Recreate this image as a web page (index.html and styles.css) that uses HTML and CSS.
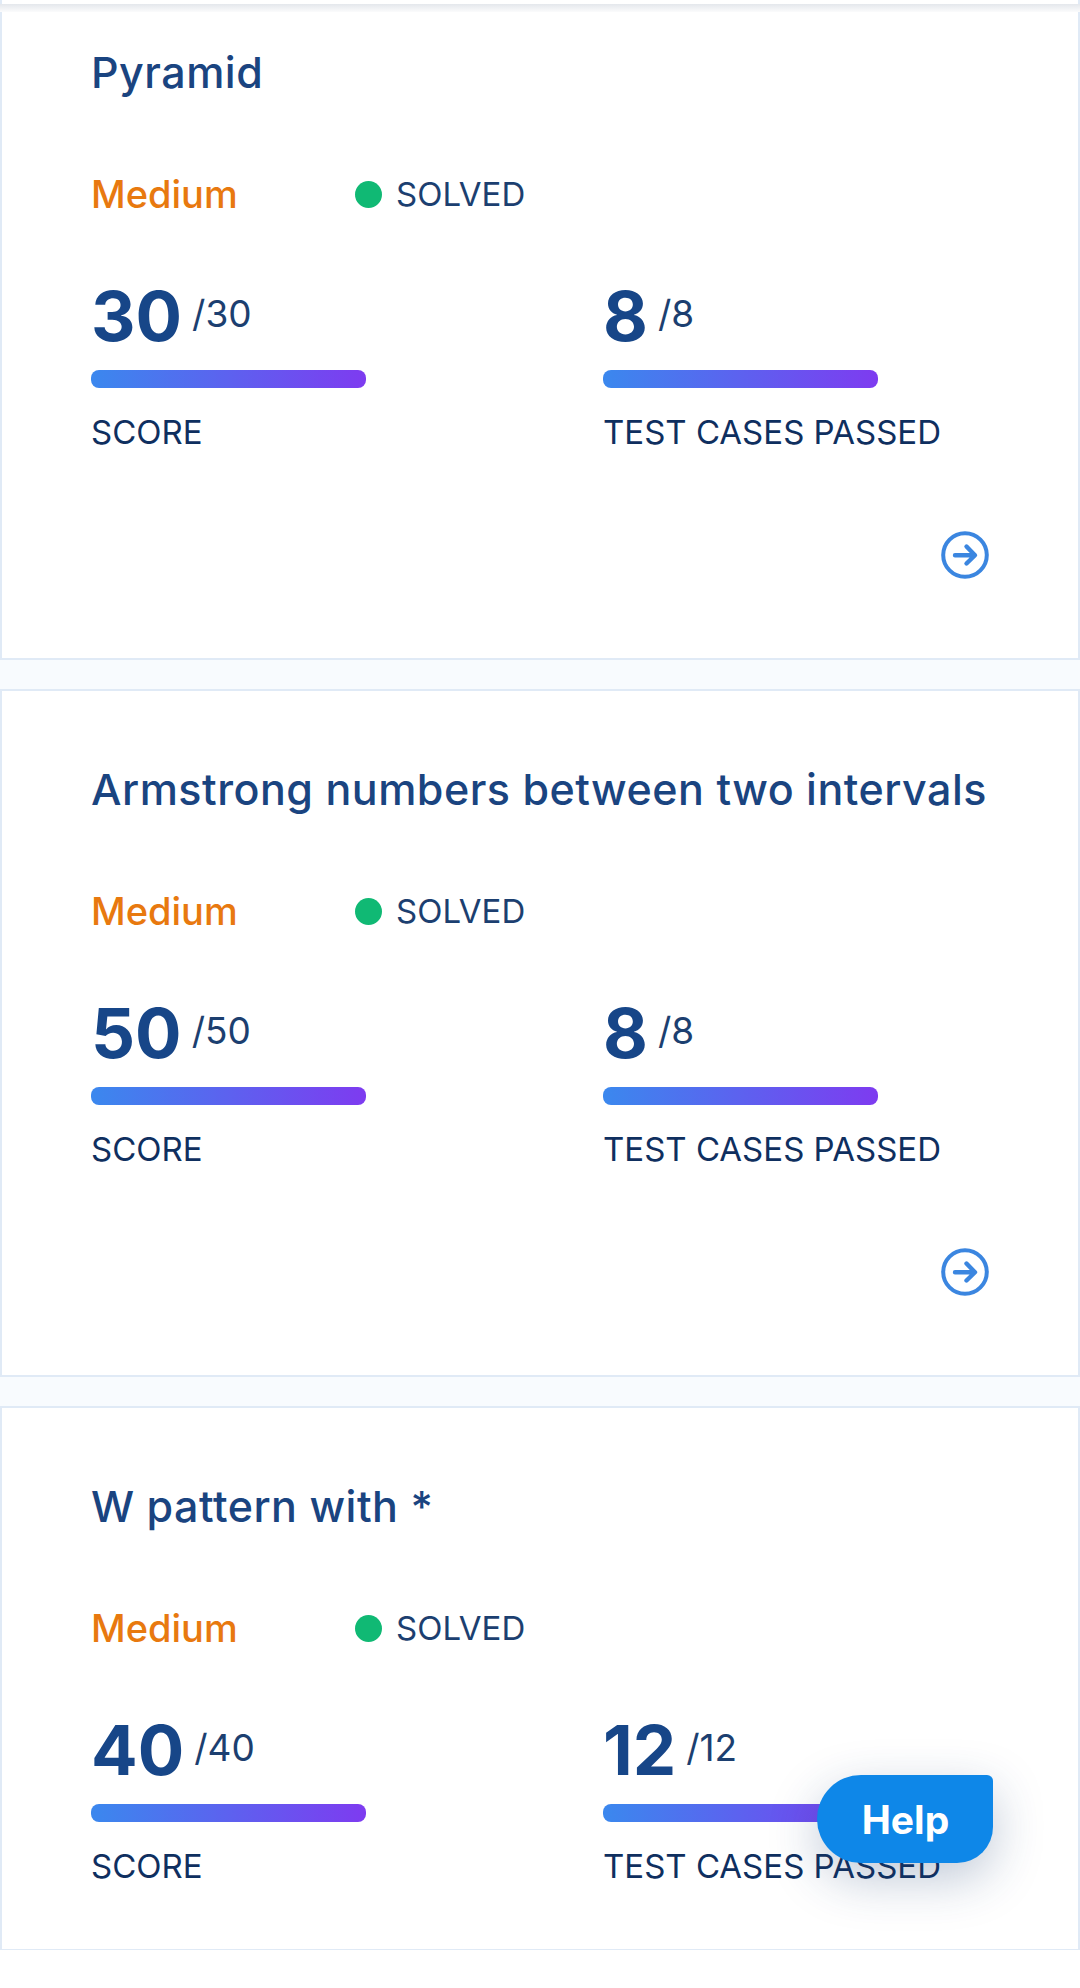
FILE: index.html
```html
<!DOCTYPE html>
<html lang="en">
<head>
<meta charset="utf-8">
<title>Problems</title>
<link rel="stylesheet" href="styles.css">
</head>
<body>
<div class="top-shadow"></div>
<main class="list">
  <article class="card">
    <h2 class="title">Pyramid</h2>
    <div class="meta"><span class="level">Medium</span><span class="status"><i class="dot"></i>SOLVED</span></div>
    <div class="stats">
      <div class="stat"><div class="nums"><b class="num">30</b><span class="total">/30</span></div><div class="bar"></div><div class="label">SCORE</div></div>
      <div class="stat"><div class="nums"><b class="num">8</b><span class="total">/8</span></div><div class="bar"></div><div class="label">TEST CASES PASSED</div></div>
    </div>
    <div class="go"><svg class="arrow" viewBox="0 0 48 48" fill="none" stroke="#3b86e0" stroke-linecap="round" stroke-linejoin="round"><circle cx="24" cy="24" r="21.8" stroke-width="4"/><path d="M14 24.2H33M25.5 15.5L34 24.2L25.5 32.5" stroke-width="4.4"/></svg></div>
  </article>
  <article class="card">
    <h2 class="title">Armstrong numbers between two intervals</h2>
    <div class="meta"><span class="level">Medium</span><span class="status"><i class="dot"></i>SOLVED</span></div>
    <div class="stats">
      <div class="stat"><div class="nums"><b class="num">50</b><span class="total">/50</span></div><div class="bar"></div><div class="label">SCORE</div></div>
      <div class="stat"><div class="nums"><b class="num">8</b><span class="total">/8</span></div><div class="bar"></div><div class="label">TEST CASES PASSED</div></div>
    </div>
    <div class="go"><svg class="arrow" viewBox="0 0 48 48" fill="none" stroke="#3b86e0" stroke-linecap="round" stroke-linejoin="round"><circle cx="24" cy="24" r="21.8" stroke-width="4"/><path d="M14 24.2H33M25.5 15.5L34 24.2L25.5 32.5" stroke-width="4.4"/></svg></div>
  </article>
  <article class="card card-last">
    <h2 class="title">W pattern with *</h2>
    <div class="meta"><span class="level">Medium</span><span class="status"><i class="dot"></i>SOLVED</span></div>
    <div class="stats">
      <div class="stat"><div class="nums"><b class="num">40</b><span class="total">/40</span></div><div class="bar"></div><div class="label">SCORE</div></div>
      <div class="stat"><div class="nums"><b class="num">12</b><span class="total">/12</span></div><div class="bar"></div><div class="label">TEST CASES PASSED</div></div>
    </div>
  </article>
</main>
<button class="help">Help</button>
</body>
</html>
```

FILE: styles.css
```css
* { box-sizing: border-box; }
html, body { margin: 0; padding: 0; }
body {
  width: 1080px;
  height: 1988px;
  overflow: hidden;
  position: relative;
  background: #ffffff;
  font-family: Inter, "Liberation Sans", sans-serif;
}
.top-shadow {
  position: absolute;
  top: 4px;
  left: 0;
  right: 0;
  height: 8px;
  background: linear-gradient(#e4e7ec, #fbfbfc);
  z-index: 2;
}
.list {
  margin-top: -28px;
  display: flex;
  flex-direction: column;
  gap: 29px;
  background: #f8fbfe;
}
.card {
  height: 688px;
  padding: 73px 89px 0 89px;
  background: #ffffff;
  border: 2px solid #e0eaf6;
}
.card-last {
  height: 544px;
  border-width: 2px 2px 1px;
}
.title {
  margin: 0;
  font-size: 43px;
  line-height: 50px;
  font-weight: 500;
  letter-spacing: 0.5px;
  color: #1a4480;
}
.meta {
  margin-top: 72px;
  display: flex;
  align-items: center;
  height: 50px;
}
.level {
  width: 264px;
  font-size: 38px;
  font-weight: 500;
  color: #e8790f;
}
.status {
  display: flex;
  align-items: center;
  gap: 14px;
  font-size: 33px;
  color: #1c3f70;
}
.dot {
  width: 27px;
  height: 27px;
  border-radius: 50%;
  background: #10b974;
}
.stats {
  margin-top: 55px;
  display: grid;
  grid-template-columns: 512px auto;
}
.nums {
  display: flex;
  align-items: baseline;
  height: 84px;
  line-height: 84px;
}
.num {
  font-size: 69px;
  font-weight: 700;
  color: #174688;
}
.total {
  margin-left: 10px;
  font-size: 37px;
  position: relative;
  top: -14px;
  color: #1c3f70;
}
.bar {
  margin-top: 12px;
  width: 275px;
  height: 18px;
  border-radius: 8px;
  background: linear-gradient(90deg, #3b88ee, #7e3bf0);
}
.label {
  margin-top: 25px;
  font-size: 33px;
  line-height: 38px;
  color: #0f2f5f;
}
.go {
  margin-top: 80px;
  display: flex;
  justify-content: flex-end;
}
.arrow {
  width: 48px;
  height: 48px;
}
.help {
  position: absolute;
  left: 817px;
  top: 1775px;
  width: 176px;
  height: 88px;
  border: 0;
  padding: 0 0 0 1px;
  border-radius: 44px 6px 36px 44px;
  background: #0e87e8;
  color: #ffffff;
  font-family: Inter, "Liberation Sans", sans-serif;
  font-size: 39px;
  font-weight: 700;
  box-shadow: 0 16px 50px rgba(30, 60, 110, 0.28);
}
```
